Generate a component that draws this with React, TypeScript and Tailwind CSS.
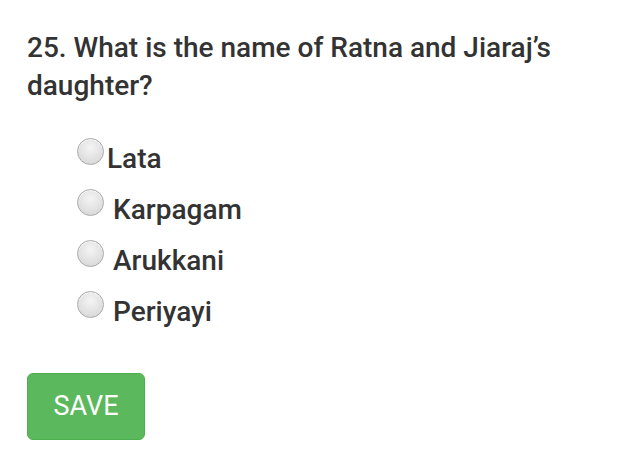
import React from 'react';

const options = ['Lata', 'Karpagam', 'Arukkani', 'Periyayi'];

const Radio = () => (
  <span className="inline-block h-[27px] w-[27px] shrink-0 rounded-full border border-[#a9a9a9] bg-[radial-gradient(circle_at_50%_35%,#f4f4f4_0%,#e2e2e2_55%,#d2d2d2_100%)] shadow-[inset_0_1px_1px_rgba(255,255,255,0.8)]" />
);

const App = () => {
  return (
    <div className="h-[458px] w-[640px] bg-white font-['Roboto',sans-serif] text-[#333]">
      <div className="pl-[27px] pr-4 pt-[29px]">
        <h2 className="text-[28px] font-medium leading-[38px]">
          25. What is the name of Ratna and Jiaraj’s daughter?
        </h2>

        <div className="mt-[33px] flex flex-col gap-[13px] pl-[50px]">
          {options.map((opt, i) => (
            <label key={opt} className="flex items-start text-[28px] font-medium leading-[34px]">
              <Radio />
              <span className={i === 0 ? 'ml-[3px] mt-[4px]' : 'ml-[9px] mt-[4px]'}>{opt}</span>
            </label>
          ))}
        </div>

        <button className="mt-[44px] flex h-[67px] w-[118px] items-center justify-center rounded-[6px] border border-[#4cae4c] bg-[#5cb85c] text-[27px] text-white">
          SAVE
        </button>
      </div>
    </div>
  );
};

export default App;
